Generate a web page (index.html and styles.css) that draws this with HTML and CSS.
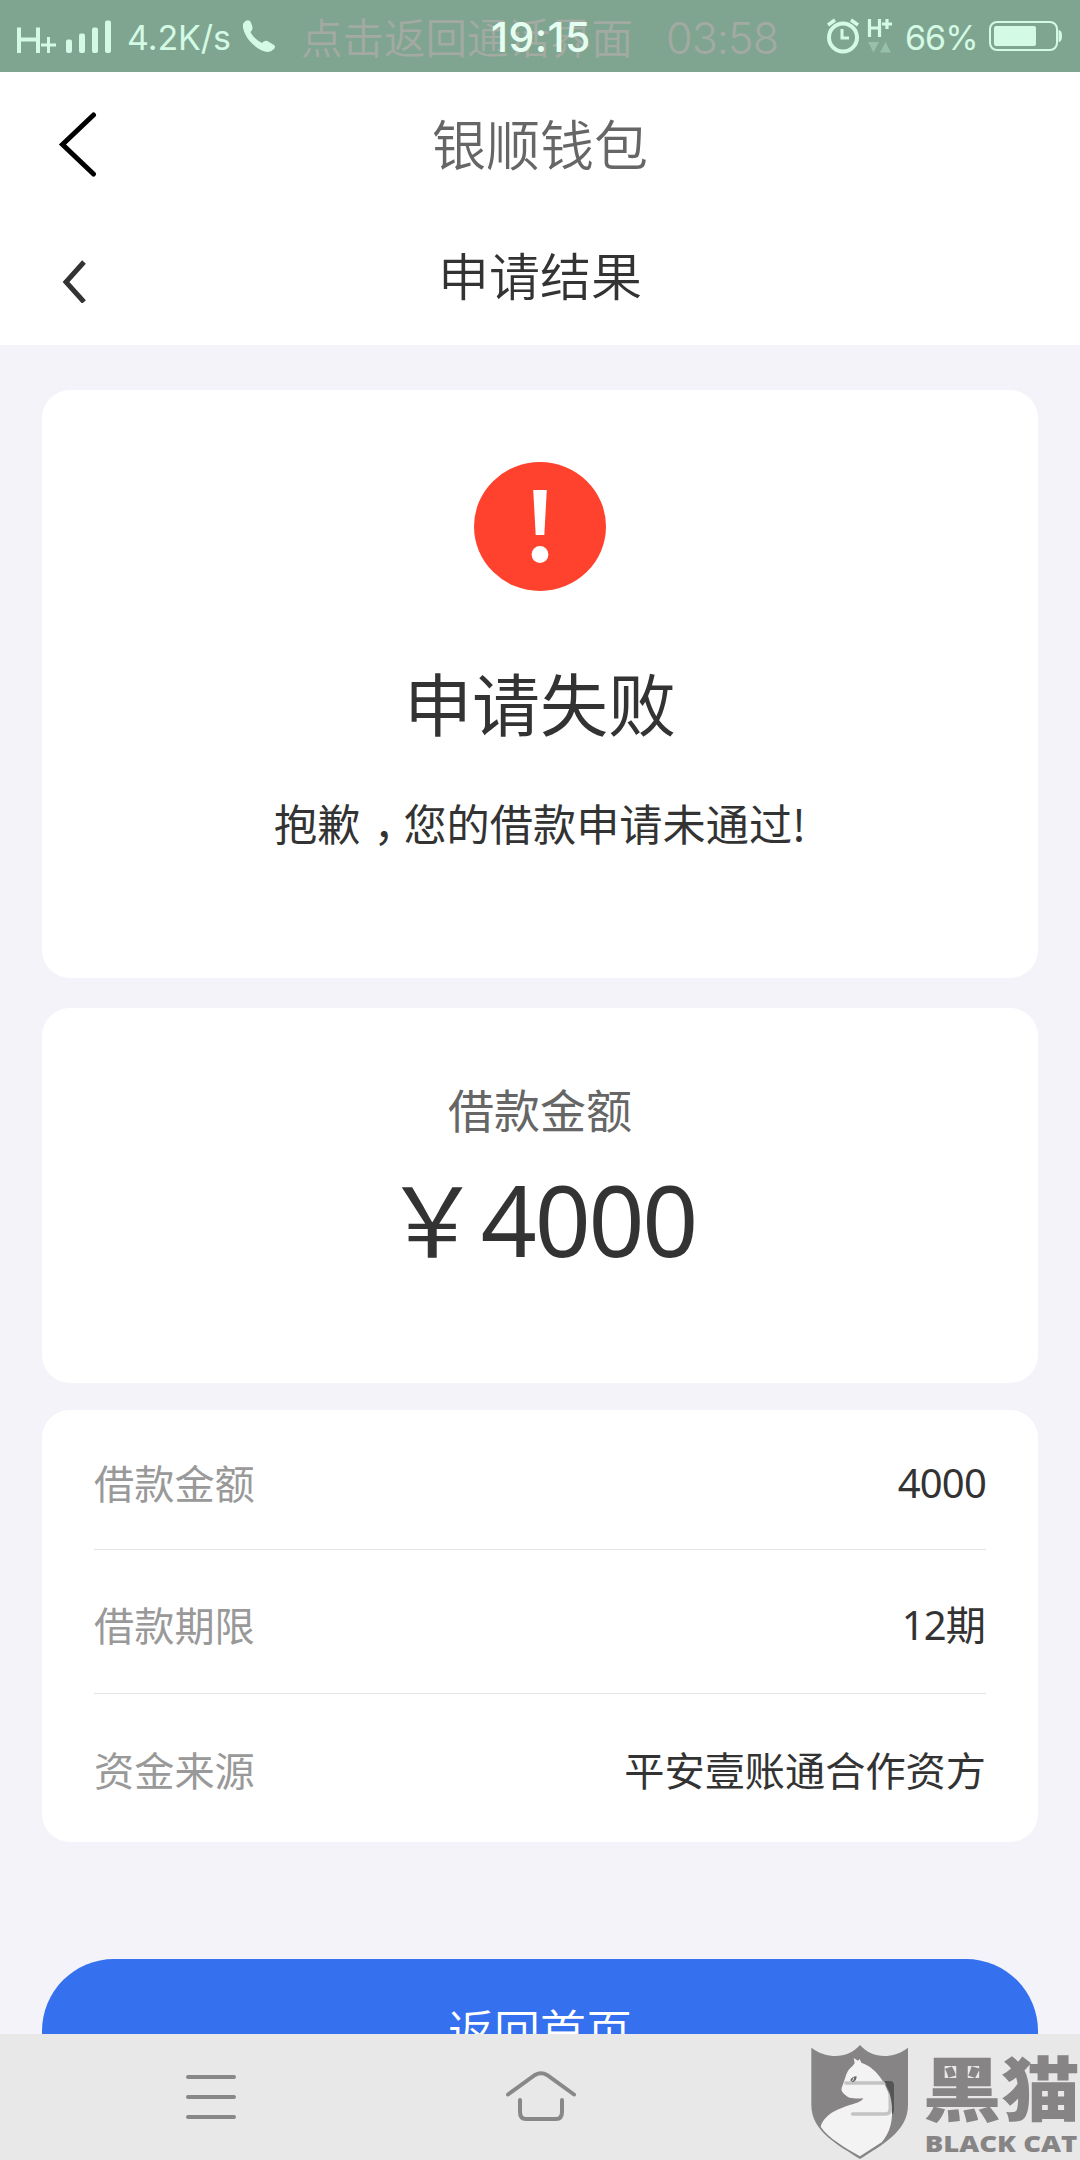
FILE: index.html
```html
<!DOCTYPE html>
<html lang="zh-CN">
<head>
<meta charset="utf-8">
<title>申请结果</title>
<link rel="stylesheet" href="styles.css">
</head>
<body>
<div class="phone">
  <header class="status">
    <div class="status-left">
      <svg class="signal" width="98" height="36" viewBox="0 0 98 36">
        <g stroke="currentColor" fill="none" stroke-width="4">
          <path d="M3 9.5V35M22 9.5V35M3 21.500H22"/>
          <path d="M25 27H40M32.500 19V35" stroke-width="3"/>
        </g>
        <g fill="currentColor">
          <rect x="50" y="21.500" width="6" height="13.500" rx="2"/>
          <rect x="63" y="15.500" width="6" height="19.500" rx="2"/>
          <rect x="76" y="9.500" width="6" height="25.500" rx="2"/>
          <rect x="89" y="2.500" width="6" height="32.500" rx="2"/>
        </g>
      </svg>
      <span class="speed">4.2K/s</span>
      <svg class="call" width="34" height="34" viewBox="0 0 34 34">
        <path fill="currentColor" d="M2 3.500C5 0 8.500 1 9.500 5C11 9 11 10 8.500 13C11 18 15.500 22 20 24C22.500 21.500 24.500 21 27 23L32 26C34 28 33 29.500 30 31.500C26 34.500 20 32.500 14 28C7 22.500 2 15 1 8.500C.8 6 .8 5 2 3.500Z"/>
      </svg>
    </div>
    <div class="status-call"><span class="call-hint">点击返回通话界面</span><span class="call-time">03:58</span></div>
    <div class="status-right">
      <svg width="36" height="40" viewBox="0 0 36 40" fill="none" stroke="currentColor">
        <circle cx="16" cy="21.500" r="14" stroke-width="4"/>
        <path d="M15 13V22H22" stroke-width="3"/>
        <path d="M1 9L8 4M24 4L31 9" stroke-width="3.500"/>
      </svg>
      <svg width="26" height="36" viewBox="0 0 26 36">
        <path d="M2.500 1V19M12.500 1V19M2.500 10H12.500M15 6H25M20 1V11" fill="none" stroke="currentColor" stroke-width="3.200"/>
        <path d="M1 24H12L6.500 34.500ZM13 34.500H24L18.500 24Z" fill="#96c0aa"/>
      </svg>
      <span class="percent">66%</span>
      <svg width="74" height="32" viewBox="0 0 74 32">
        <rect x="1" y="2" width="67" height="28" rx="7" fill="none" stroke="currentColor" stroke-width="2"/>
        <rect x="5" y="6" width="42" height="20" rx="2" fill="currentColor"/>
        <path d="M69.500 10Q73 10 73 16T69.500 22Z" fill="currentColor"/>
      </svg>
    </div>
    <span class="clock">19:15</span>
  </header>

  <nav class="titlebar app">
    <svg class="back" width="40" height="66" viewBox="0 0 40 66"><path d="M35.500 4L4.500 33.500L35.500 63" fill="none" stroke="#000" stroke-width="5" stroke-linecap="round"/></svg>
    <h1>银顺钱包</h1>
  </nav>
  <nav class="titlebar page">
    <svg class="back" width="26" height="44" viewBox="0 0 26 44"><path d="M23 3L5 23L23 43" fill="none" stroke="#333" stroke-width="5"/></svg>
    <h2>申请结果</h2>
  </nav>

  <main class="content">
    <section class="card result">
      <svg width="132" height="130" viewBox="0 0 132 130">
        <ellipse cx="66" cy="64.500" rx="66" ry="64.500" fill="#ff422d"/>
        <path d="M59.200 28H72.800L70.300 73H61.700Z" fill="#fff"/>
        <circle cx="66" cy="92.500" r="8.400" fill="#fff"/>
      </svg>
      <p class="result-title">申请失败</p>
      <p class="result-text">抱歉<span class="comma">，</span>您的借款申请未通过!</p>
    </section>
    <section class="card amount">
      <p class="amount-label">借款金额</p>
      <p class="amount-value">￥<span class="figure">4000</span></p>
    </section>
    <dl class="card details">
      <div class="row"><dt>借款金额</dt><dd><span class="num">4000</span></dd></div>
      <div class="row"><dt>借款期限</dt><dd><span class="num">12</span>期</dd></div>
      <div class="row"><dt>资金来源</dt><dd>平安壹账通合作资方</dd></div>
    </dl>
    <button class="home-button">返回首页</button>
  </main>

  <footer class="navbar">
    <svg width="52" height="48" viewBox="0 0 52 48" stroke="#888" stroke-width="4" stroke-linecap="round"><path d="M3 4H49M3 24H49M3 44H49"/></svg>
    <svg width="74" height="54" viewBox="0 0 74 54" fill="none" stroke="#888" stroke-width="4" stroke-linecap="round"><path d="M4 24.500L31 5Q37 1.500 43 5L70 24.500M16 30V42Q16 49 22 49H52Q58 49 58 42V30"/></svg>
    <svg class="watermark" width="290" height="130" viewBox="0 0 870 390">
      <path fill="#868484" d="M64 53C115 90 175 85 210 45C245 85 305 90 354 53V225C354 305 275 345 210 387C145 345 64 305 64 225Z"/>
      <path fill="#f3f3f3" d="M191 84L204 92L209 87L214 98C265 115 300 175 306 235C309 290 290 320 275 337L210 379C165 352 115 325 92 290C105 245 165 230 190 222C207 217 216 212 220 205C195 207 175 205 171 199C156 188 151 181 157 168C165 150 166 135 175 121C182 112 191 106 194 99Z"/>
      <path fill="none" stroke="#c3c3c3" stroke-width="11" stroke-linecap="round" d="M168 159H285C297 159 301 164 301 175V235C301 247 297 252 285 252H188"/>
      <path fill="#555" d="M282 153H300Q312 153 312 166V240Q312 249 306 254V230C304 200 295 175 282 153Z"/>
      <path fill="#666" d="M181 151Q185 140 200 139Q199 154 188 157Z"/><path stroke="#eee" stroke-width="3" d="M191 143L188 153"/>
      <g fill="#868484">
        <text class="brand-cn" transform="translate(398 257) scale(1 .91)" textLength="472" lengthAdjust="spacingAndGlyphs">黑猫</text>
        <text class="brand-en" x="404" y="366" textLength="458" lengthAdjust="spacingAndGlyphs">BLACK CAT</text>
      </g>
    </svg>
  </footer>
</div>
</body>
</html>
```
FILE: styles.css
```css
* { box-sizing: border-box; }
body, h1, h2, p, dl, dd { margin: 0; }
body {
  font-family: "Noto Sans CJK SC", sans-serif;
  color: #333;
  background: #f4f3f9;
}
.phone {
  width: 1080px;
  height: 2160px;
  display: flex;
  flex-direction: column;
  overflow: hidden;
}
.status {
  position: relative;
  flex: none;
  height: 72px;
  display: flex;
  align-items: center;
  background: #7fa590;
  color: #d3fae5;
  font-family: Inter, sans-serif;
  white-space: nowrap;
}
.status-left { display: flex; align-items: center; width: 301px; padding-left: 16px; }
.speed { width: 107px; margin-left: 13px; padding-top: 2px; font-size: 34px; letter-spacing: -.1px; }
.call { margin-left: 8px; }
.status-call { display: flex; align-items: center; width: 526px; color: #a3aaa2; }
.call-hint { width: 365px; font: 350 41.5px "Noto Sans CJK SC", "Noto Sans CJK SC DemiLight", sans-serif; }
.call-time { padding-top: 3px; font-size: 43px; font-weight: 350; letter-spacing: -.9px; }
.status-right { display: flex; align-items: center; }
.percent { width: 77px; margin-left: 12px; padding-top: 2px; font-size: 34px; letter-spacing: -1px; }
.status-right svg { flex: none; }
.status-right svg:first-child { margin-right: 4px; }
.status-right svg:last-child { margin-left: 7px; }
.clock { position: absolute; left: 491px; top: 13px; font-size: 41px; line-height: 48px; color: #e4fff1; letter-spacing: .4px; font-weight: 450; }

.titlebar {
  flex: none;
  display: grid;
  grid-template-columns: 120px 1fr 120px;
  align-items: center;
  background: #fff;
}
.titlebar h1, .titlebar h2 { text-align: center; font-weight: 350; }
.app { height: 144px; }
.app .back { margin-left: 58px; }
.app h1 { font-size: 54px; line-height: 80px; margin-bottom: 3px; color: #666; }
.page { height: 129px; }
.page .back { margin-left: 61px; }
.page h2 { font-size: 51px; line-height: 76px; margin-bottom: 13px; }

.content {
  flex: none;
  height: 1689px;
  padding: 45px 42px 0;
  overflow: hidden;
}
.card {
  display: flex;
  flex-direction: column;
  align-items: center;
  background: #fff;
  border-radius: 28px;
}
.result { height: 588px; padding-top: 72px; }
.result-title { margin-top: 60px; font-size: 68px; line-height: 100px; }
.result-text { margin-top: 38px; font-size: 43.2px; line-height: 64px; }
.comma { display: inline-block; width: 43px; text-indent: 13px; }
.amount { height: 375px; margin-top: 30px; padding-top: 66px; }
.amount-label { font-size: 46px; line-height: 68px; color: #666; }
.amount-value { margin-top: 3px; font-size: 97px; line-height: 140px; }
.figure { font-family: "Noto Sans", sans-serif; font-size: 98px; letter-spacing: -2.2px; }
.details { height: 432px; margin-top: 27px; padding: 0 52px; align-items: stretch; }
.row {
  height: 144px;
  display: flex;
  justify-content: space-between;
  align-items: center;
  padding-top: 5px;
  font-size: 40.2px;
  line-height: 60px;
  border-bottom: 1px solid #e4e4e4;
}
.row:first-child { height: 140px; }
.row:last-child { border-bottom: 0; }
.row dt { color: #999; }
.num { font-family: "Noto Sans", sans-serif; font-size: 40px; letter-spacing: -.8px; }
.home-button {
  display: block;
  width: 100%;
  height: 144px;
  margin-top: 117px;
  padding: 0 0 7px;
  border: 0;
  border-radius: 72px;
  background: #3570ee;
  color: #fff;
  font: 350 46px/68px "Noto Sans CJK SC", sans-serif;
}

.navbar {
  position: relative;
  flex: none;
  height: 126px;
  display: flex;
  align-items: center;
  padding: 0 0 0 185px;
  gap: 267px;
  background: #e8e8e8;
}
.watermark { position: absolute; right: 0; bottom: 0; }
.brand-cn { font: 900 232px "Noto Sans CJK SC", sans-serif; }
.brand-en { font: 800 66px "Open Sans", sans-serif; }
```
